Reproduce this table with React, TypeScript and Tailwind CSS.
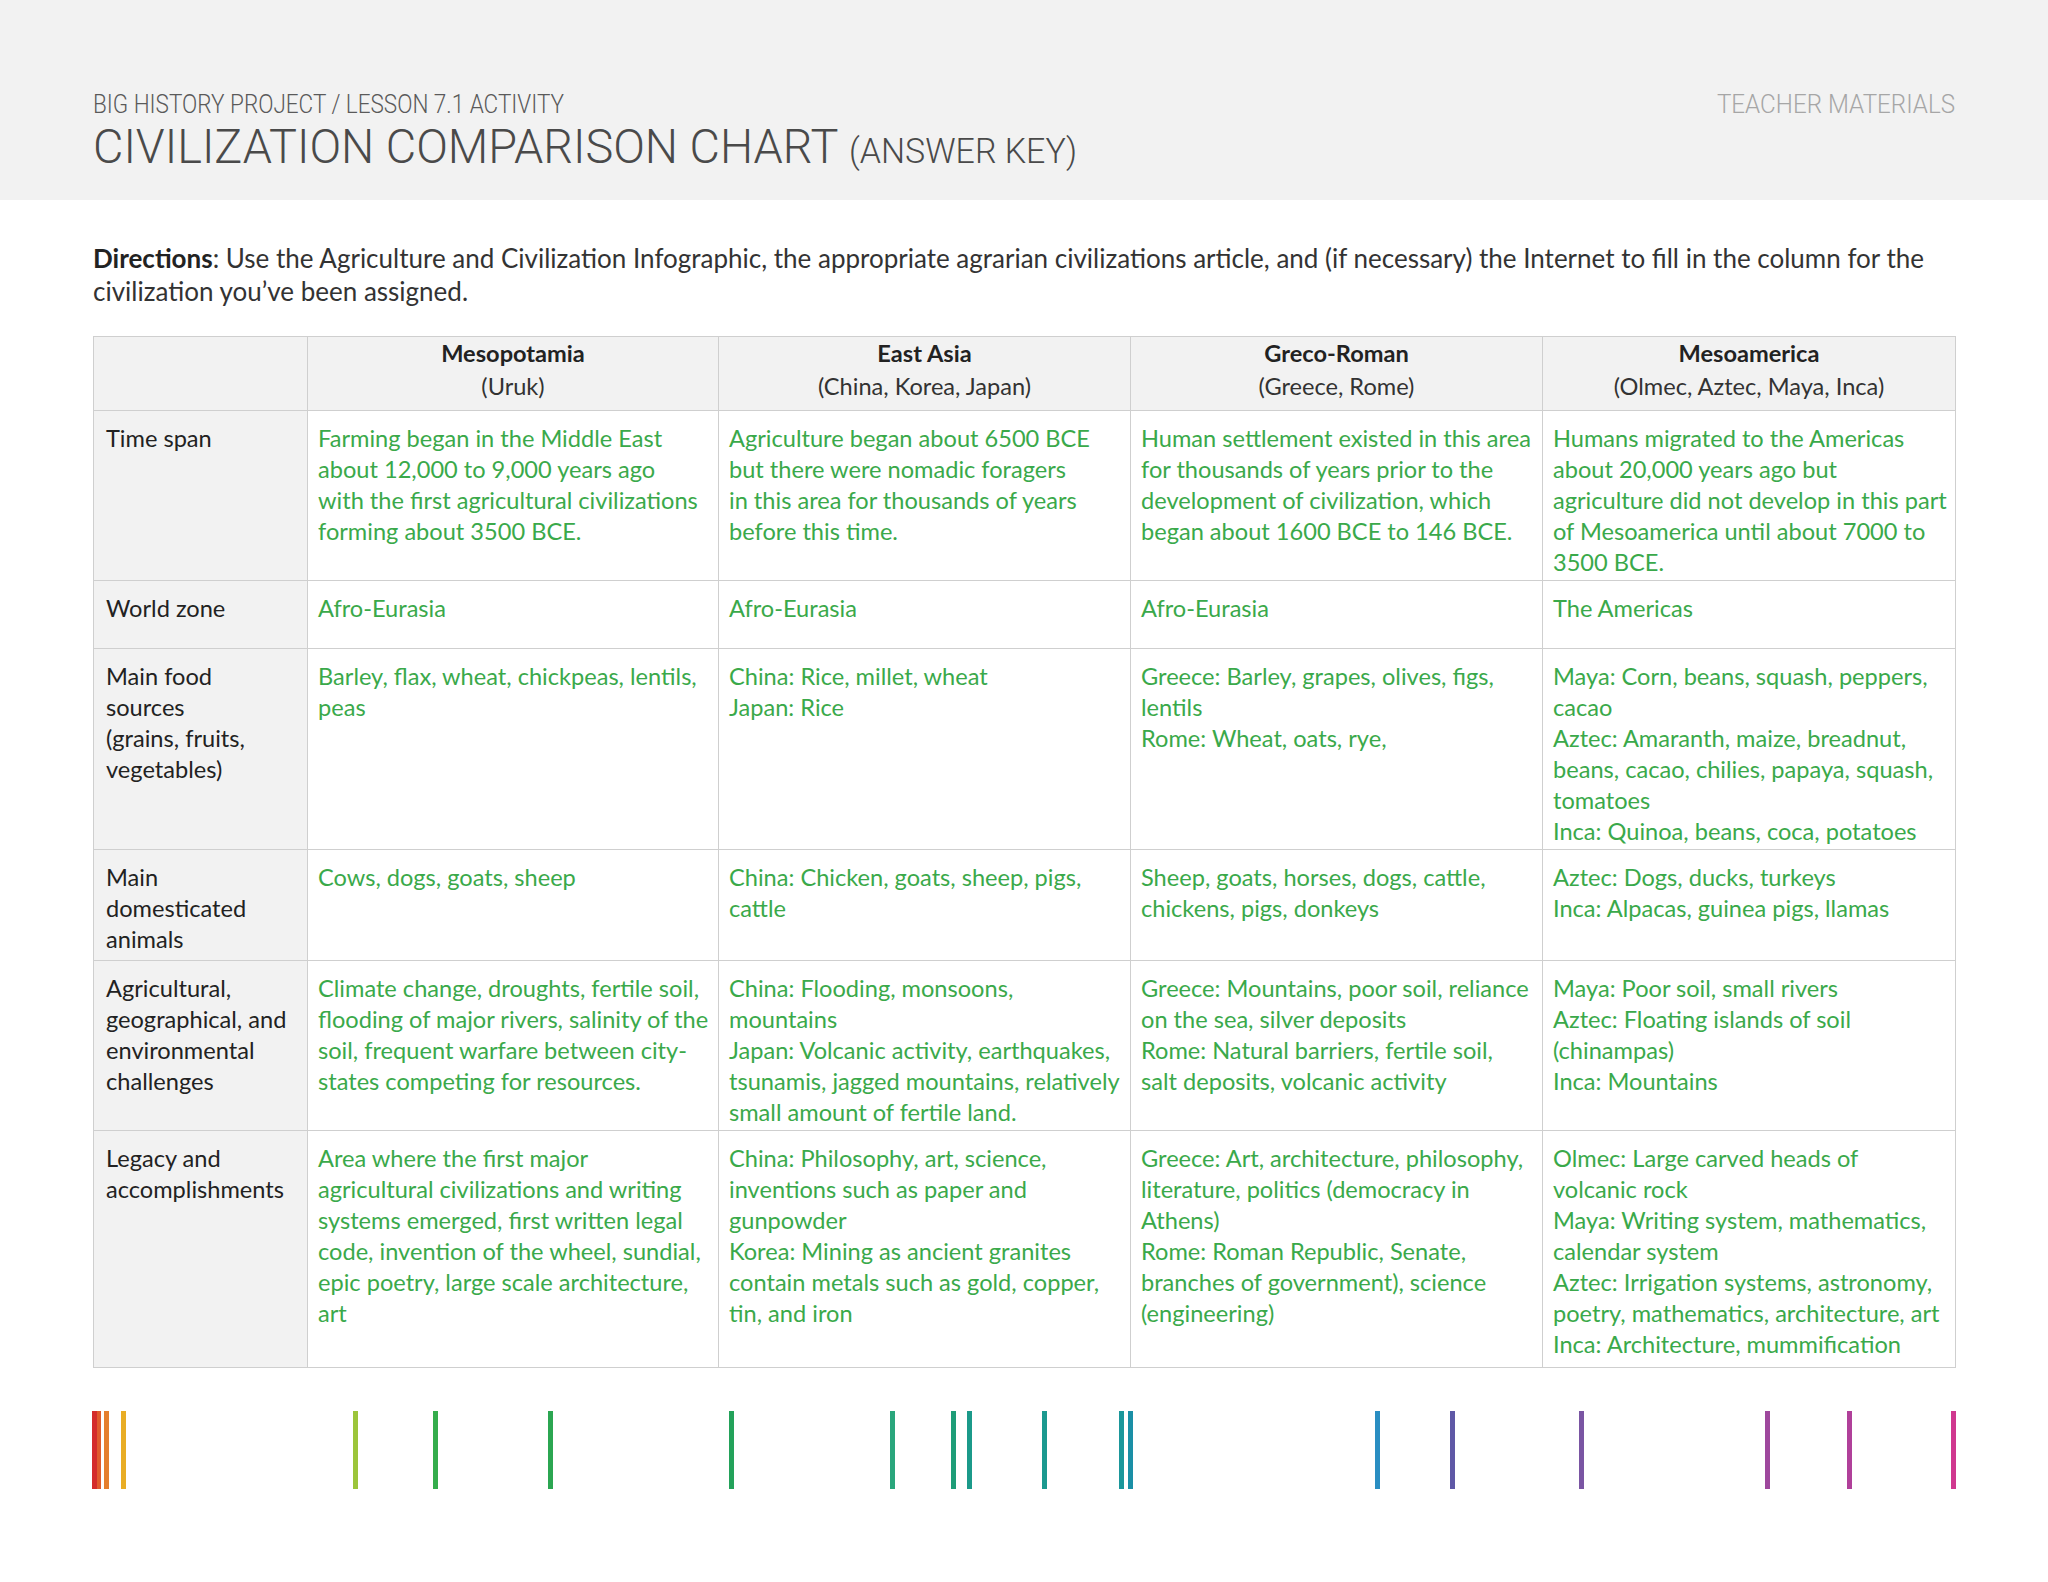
const body = { fontFamily: 'Lato, "Noto Sans", sans-serif' };
const head = { fontFamily: 'Roboto, "Liberation Sans", sans-serif' };

interface Row { label: string[]; cells: string[][]; h: string; }

const columns = [
  { name: 'Mesopotamia', sub: '(Uruk)' },
  { name: 'East Asia', sub: '(China, Korea, Japan)' },
  { name: 'Greco-Roman', sub: '(Greece, Rome)' },
  { name: 'Mesoamerica', sub: '(Olmec, Aztec, Maya, Inca)' },
];

const rows: Row[] = [
  {
    label: ['Time span'],
    h: 'h-[170px]',
    cells: [
      ['Farming began in the Middle East', 'about 12,000 to 9,000 years ago', 'with the first agricultural civilizations', 'forming about 3500 BCE.'],
      ['Agriculture began about 6500 BCE', 'but there were nomadic foragers', 'in this area for thousands of years', 'before this time.'],
      ['Human settlement existed in this area', 'for thousands of years prior to the', 'development of civilization, which', 'began about 1600 BCE to 146 BCE.'],
      ['Humans migrated to the Americas', 'about 20,000 years ago but', 'agriculture did not develop in this part', 'of Mesoamerica until about 7000 to', '3500 BCE.'],
    ],
  },
  {
    label: ['World zone'],
    h: 'h-[68px]',
    cells: [['Afro-Eurasia'], ['Afro-Eurasia'], ['Afro-Eurasia'], ['The Americas']],
  },
  {
    label: ['Main food', 'sources', '(grains, fruits,', 'vegetables)'],
    h: 'h-[201px]',
    cells: [
      ['Barley, flax, wheat, chickpeas, lentils,', 'peas'],
      ['China: Rice, millet, wheat', 'Japan: Rice'],
      ['Greece: Barley, grapes, olives, figs,', 'lentils', 'Rome: Wheat, oats, rye,'],
      ['Maya: Corn, beans, squash, peppers,', 'cacao', 'Aztec: Amaranth, maize, breadnut,', 'beans, cacao, chilies, papaya, squash,', 'tomatoes', 'Inca: Quinoa, beans, coca, potatoes'],
    ],
  },
  {
    label: ['Main', 'domesticated', 'animals'],
    h: 'h-[111px]',
    cells: [
      ['Cows, dogs, goats, sheep'],
      ['China: Chicken, goats, sheep, pigs,', 'cattle'],
      ['Sheep, goats, horses, dogs, cattle,', 'chickens, pigs, donkeys'],
      ['Aztec: Dogs, ducks, turkeys', 'Inca: Alpacas, guinea pigs, llamas'],
    ],
  },
  {
    label: ['Agricultural,', 'geographical, and', 'environmental', 'challenges'],
    h: 'h-[170px]',
    cells: [
      ['Climate change, droughts, fertile soil,', 'flooding of major rivers, salinity of the', 'soil, frequent warfare between city-', 'states competing for resources.'],
      ['China: Flooding, monsoons,', 'mountains', 'Japan: Volcanic activity, earthquakes,', 'tsunamis, jagged mountains, relatively', 'small amount of fertile land.'],
      ['Greece: Mountains, poor soil, reliance', 'on the sea, silver deposits', 'Rome: Natural barriers, fertile soil,', 'salt deposits, volcanic activity'],
      ['Maya: Poor soil, small rivers', 'Aztec: Floating islands of soil', '(chinampas)', 'Inca: Mountains'],
    ],
  },
  {
    label: ['Legacy and', 'accomplishments'],
    h: 'h-[237px]',
    cells: [
      ['Area where the first major', 'agricultural civilizations and writing', 'systems emerged, first written legal', 'code, invention of the wheel, sundial,', 'epic poetry, large scale architecture,', 'art'],
      ['China: Philosophy, art, science,', 'inventions such as paper and', 'gunpowder', 'Korea: Mining as ancient granites', 'contain metals such as gold, copper,', 'tin, and iron'],
      ['Greece: Art, architecture, philosophy,', 'literature, politics (democracy in', 'Athens)', 'Rome: Roman Republic, Senate,', 'branches of government), science', '(engineering)'],
      ['Olmec: Large carved heads of', 'volcanic rock', 'Maya: Writing system, mathematics,', 'calendar system', 'Aztec: Irrigation systems, astronomy,', 'poetry, mathematics, architecture, art', 'Inca: Architecture, mummification'],
    ],
  },
];

// timeline ticks along the bottom, x in page pixels
const ticks: [number, number, string][] = [
  [92, 5, '#d42b2b'], [97, 4, '#e05a2c'], [104, 5, '#e57f2e'], [121, 5, '#e9ad25'],
  [353, 5, '#9cc53b'], [433, 5, '#35ad4c'], [548, 5, '#2ba651'], [729, 5, '#23a25a'],
  [890, 5, '#2aa67c'], [951, 5, '#1e9d78'], [967, 5, '#1b9a8a'], [1042, 5, '#1b998f'],
  [1119, 5, '#1b979b'], [1128, 5, '#1a8fa6'], [1375, 5, '#2a8ec2'], [1450, 5, '#5f58a6'],
  [1579, 5, '#7a55a3'], [1765, 5, '#9e489d'], [1847, 5, '#b0409a'], [1951, 5, '#d0388f'],
];

const Lines = ({ lines }: { lines: string[] }) => (
  <>{lines.map((l, i) => <div key={i} className="whitespace-nowrap">{l}</div>)}</>
);

const App = () => {
  return (
    <div className="w-[2048px] min-h-[1582px] bg-white">
      <div className="h-[200px] bg-[#f2f2f2] px-[93px] pt-[92px] flex justify-between" style={head}>
        <div>
          <div className="text-[25px] leading-[25px] text-[#5a5a5a] font-light whitespace-nowrap scale-x-[0.9] origin-left">BIG HISTORY PROJECT / LESSON 7.1 ACTIVITY</div>
          <div className="mt-[5px] text-[49px] leading-[49px] text-[#4a4a4a] font-light whitespace-nowrap scale-x-[0.955] origin-left">
            CIVILIZATION COMPARISON CHART <span className="text-[35.5px]">(ANSWER KEY)</span>
          </div>
        </div>
        <div className="text-[26px] leading-[25px] text-[#a6a6a6] font-light whitespace-nowrap scale-x-[0.93] origin-right">TEACHER MATERIALS</div>
      </div>

      <div className="mt-[42px] px-[93px] text-[26px] leading-[33px] text-[#333]" style={body}>
        <div className="whitespace-nowrap"><span className="font-bold text-[#222]">Directions</span>: Use the Agriculture and Civilization Infographic, the appropriate agrarian civilizations article, and (if necessary) the Internet to fill in the column for the</div>
        <div>civilization you’ve been assigned.</div>
      </div>

      <div className="mt-[28px] ml-[93px] w-[1863px] grid grid-cols-[214px_411px_412px_412px_413px] border-l border-t border-[#cfcfcf] text-[23.6px] leading-[31px]" style={body}>
        <div className="h-[74px] bg-[#f2f2f2] border-r border-b border-[#cfcfcf]" />
        {columns.map(c => (
          <div key={c.name} className="h-[74px] bg-[#f2f2f2] border-r border-b border-[#cfcfcf] text-center leading-[33px] text-[#222]">
            <div className="font-bold">{c.name}</div>
            <div className="text-[#333]">{c.sub}</div>
          </div>
        ))}
        {rows.map(r => (
          <div key={r.label[0]} className="contents">
            <div className={`${r.h} bg-[#f2f2f2] border-r border-b border-[#cfcfcf] pl-[12px] pt-[12px] text-[#222]`}>
              <Lines lines={r.label} />
            </div>
            {r.cells.map((c, i) => (
              <div key={i} className={`${r.h} border-r border-b border-[#cfcfcf] pl-[10px] pt-[12px] text-[#3aa94a]`}>
                <Lines lines={c} />
              </div>
            ))}
          </div>
        ))}
      </div>

      <svg className="mt-[43px] block" width="2048" height="78" viewBox="0 0 2048 78">
        {ticks.map(([x, w, c]) => <rect key={x} x={x} y={0} width={w} height={78} fill={c} />)}
      </svg>
    </div>
  );
};

export default App;
